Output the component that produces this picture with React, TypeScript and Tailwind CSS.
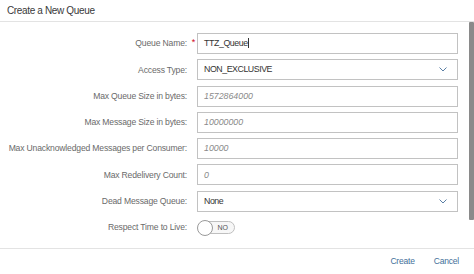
import React from "react";

const font = { fontFamily: '"Liberation Sans", Arial, sans-serif' };

function Label({ text, required }: { text: string; required?: boolean }) {
  return (
    <div className="w-[187px] shrink-0 text-right text-[8.6px] tracking-[-0.17px] text-[#6a6a6a] leading-none relative whitespace-nowrap">
      {text}
      {required && (
        <span className="absolute -right-[8px] top-[-1px] text-[#d0021b] text-[9px]">*</span>
      )}
    </div>
  );
}

function TextBox({ value, placeholder, caret }: { value?: string; placeholder?: string; caret?: boolean }) {
  return (
    <div className="flex-1 h-[21px] border border-[#c2c2c2] bg-white flex items-center px-[6px] text-[8.8px] leading-none">
      {value ? (
        <span className="text-[#333] tracking-[-0.4px]">
          {value}
          {caret && <span className="inline-block w-px h-[10px] bg-[#333] align-middle -mt-[2px]" />}
        </span>
      ) : (
        <span className="italic text-[#8a8a8a]">{placeholder}</span>
      )}
    </div>
  );
}

function Select({ value }: { value: string }) {
  return (
    <div className="flex-1 h-[21px] border border-[#c2c2c2] bg-white flex items-center justify-between pl-[6px] pr-[10px] text-[8.8px] leading-none text-[#333]">
      <span className="tracking-[-0.45px]">{value}</span>
      <svg width="8" height="5" viewBox="0 0 8 5" fill="none">
        <path d="M0.5 0.5 L4 4 L7.5 0.5" stroke="#5a7fa5" strokeWidth="1" />
      </svg>
    </div>
  );
}

function Row({ children, label, required }: { children: React.ReactNode; label: string; required?: boolean }) {
  return (
    <div className="flex items-center gap-[10px] h-[21px]">
      <Label text={label} required={required} />
      {children}
    </div>
  );
}

export default function App() {
  return (
    <div className="w-[474px] h-[274px] bg-white flex flex-col overflow-hidden" style={font}>
      <div className="h-[22px] shrink-0 border-b border-[#e3e3e3] flex items-center pl-[7px] text-[10px] tracking-[-0.35px] text-[#3a3a3a]">
        Create a New Queue
      </div>
      <div className="flex-1 flex min-h-0">
        <div className="flex-1 flex flex-col gap-[5.3px] pt-[11px] pr-[11px]">
          <Row label="Queue Name:" required>
            <TextBox value="TTZ_Queue" caret />
          </Row>
          <Row label="Access Type:">
            <Select value="NON_EXCLUSIVE" />
          </Row>
          <Row label="Max Queue Size in bytes:">
            <TextBox placeholder="1572864000" />
          </Row>
          <Row label="Max Message Size in bytes:">
            <TextBox placeholder="10000000" />
          </Row>
          <Row label="Max Unacknowledged Messages per Consumer:">
            <TextBox placeholder="10000" />
          </Row>
          <Row label="Max Redelivery Count:">
            <TextBox placeholder="0" />
          </Row>
          <Row label="Dead Message Queue:">
            <Select value="None" />
          </Row>
          <Row label="Respect Time to Live:">
            <div className="relative w-[38px] h-[16px] flex items-center">
              <div className="absolute left-[4px] right-0 h-[13px] rounded-full border border-[#bfbfbf] bg-[#f7f7f7] flex items-center justify-end pr-[6px]">
                <span className="text-[7px] text-[#555] leading-none">NO</span>
              </div>
              <div className="absolute left-0 top-0 w-[16px] h-[16px] rounded-full border border-[#9a9a9a] bg-white" />
            </div>
          </Row>
        </div>
        <div className="w-[5px] h-[198px] bg-[#8a8a8a] rounded-[1px] shrink-0" />
      </div>
      <div className="h-[26px] shrink-0 border-t border-[#e3e3e3] flex items-center justify-end gap-[19px] pr-[15px] text-[8.5px] tracking-[-0.2px] text-[#436f9a]">
        <span>Create</span>
        <span>Cancel</span>
      </div>
    </div>
  );
}
